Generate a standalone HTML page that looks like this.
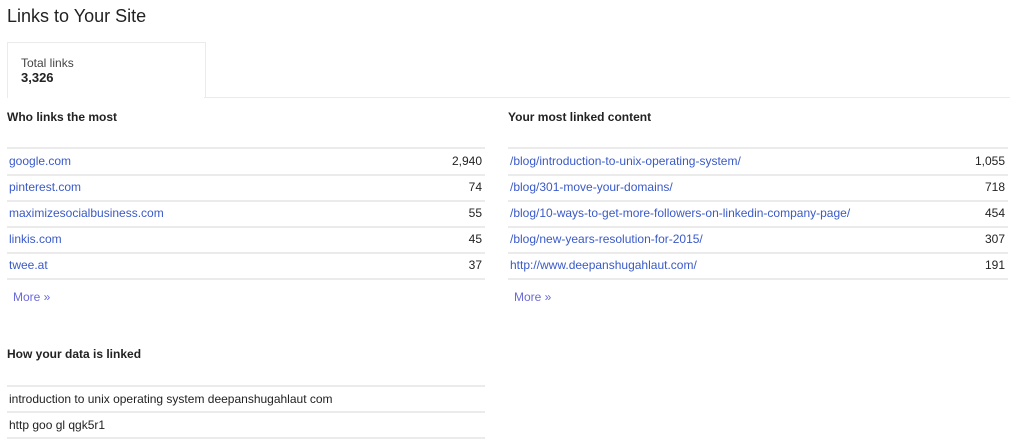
<!DOCTYPE html><html><head><style>
body{margin:0;width:1024px;height:441px;background:#fff;font-family:"Liberation Sans",Arial,sans-serif;font-size:12px;color:#222;position:relative;overflow:hidden}
.a{position:absolute}
h1{position:absolute;left:7px;top:6px;margin:0;font-size:18px;font-weight:normal;color:#222}
.box{left:7px;top:42px;width:197px;height:55px;border:1px solid #ebebeb;border-bottom:none}
.hl{height:1px;background:#ebebeb}
.h{font-weight:bold;font-size:12px}
.row{position:absolute;height:26px;line-height:26px}
.row a{color:#3a5ac8;text-decoration:none;padding-left:2px}
.row span{position:absolute;right:3px;top:0}
.more{color:#6a6ad8}
</style></head><body>
<h1>Links to Your Site</h1>
<div class="a box"></div>
<div class="a" style="left:21px;top:56px;color:#444">Total links</div>
<div class="a" style="left:21px;top:70px;font-weight:bold;font-size:13px">3,326</div>
<div class="a hl" style="left:204px;top:97px;width:806px"></div>
<div class="a h" style="left:7px;top:110px">Who links the most</div>
<div class="a h" style="left:508px;top:110px">Your most linked content</div>

<div class="a hl" style="left:7px;top:147px;width:478px;height:2px"></div>
<div class="row" style="left:7px;top:148px;width:478px"><a>google.com</a><span>2,940</span></div>
<div class="a hl" style="left:7px;top:174px;width:478px;height:2px"></div>
<div class="row" style="left:7px;top:174px;width:478px"><a>pinterest.com</a><span>74</span></div>
<div class="a hl" style="left:7px;top:200px;width:478px;height:2px"></div>
<div class="row" style="left:7px;top:200px;width:478px"><a>maximizesocialbusiness.com</a><span>55</span></div>
<div class="a hl" style="left:7px;top:226px;width:478px;height:2px"></div>
<div class="row" style="left:7px;top:226px;width:478px"><a>linkis.com</a><span>45</span></div>
<div class="a hl" style="left:7px;top:252px;width:478px;height:2px"></div>
<div class="row" style="left:7px;top:252px;width:478px"><a>twee.at</a><span>37</span></div>
<div class="a hl" style="left:7px;top:278px;width:478px;height:2px"></div>
<div class="a more" style="left:13px;top:290px">More »</div>

<div class="a hl" style="left:508px;top:147px;width:500px;height:2px"></div>
<div class="row" style="left:508px;top:148px;width:500px"><a>/blog/introduction-to-unix-operating-system/</a><span>1,055</span></div>
<div class="a hl" style="left:508px;top:174px;width:500px;height:2px"></div>
<div class="row" style="left:508px;top:174px;width:500px"><a>/blog/301-move-your-domains/</a><span>718</span></div>
<div class="a hl" style="left:508px;top:200px;width:500px;height:2px"></div>
<div class="row" style="left:508px;top:200px;width:500px"><a>/blog/10-ways-to-get-more-followers-on-linkedin-company-page/</a><span>454</span></div>
<div class="a hl" style="left:508px;top:226px;width:500px;height:2px"></div>
<div class="row" style="left:508px;top:226px;width:500px"><a>/blog/new-years-resolution-for-2015/</a><span>307</span></div>
<div class="a hl" style="left:508px;top:252px;width:500px;height:2px"></div>
<div class="row" style="left:508px;top:252px;width:500px"><a>http://www.deepanshugahlaut.com/</a><span>191</span></div>
<div class="a hl" style="left:508px;top:278px;width:500px;height:2px"></div>
<div class="a more" style="left:514px;top:290px">More »</div>

<div class="a h" style="left:7px;top:347px">How your data is linked</div>
<div class="a hl" style="left:7px;top:385px;width:478px;height:2px"></div>
<div class="row" style="left:7px;top:386px;width:478px;padding-left:2px">introduction to unix operating system deepanshugahlaut com</div>
<div class="a hl" style="left:7px;top:411px;width:478px;height:2px"></div>
<div class="row" style="left:7px;top:412px;width:478px;padding-left:2px">http goo gl qgk5r1</div>
<div class="a hl" style="left:7px;top:437px;width:478px;height:2px"></div>
</body></html>
